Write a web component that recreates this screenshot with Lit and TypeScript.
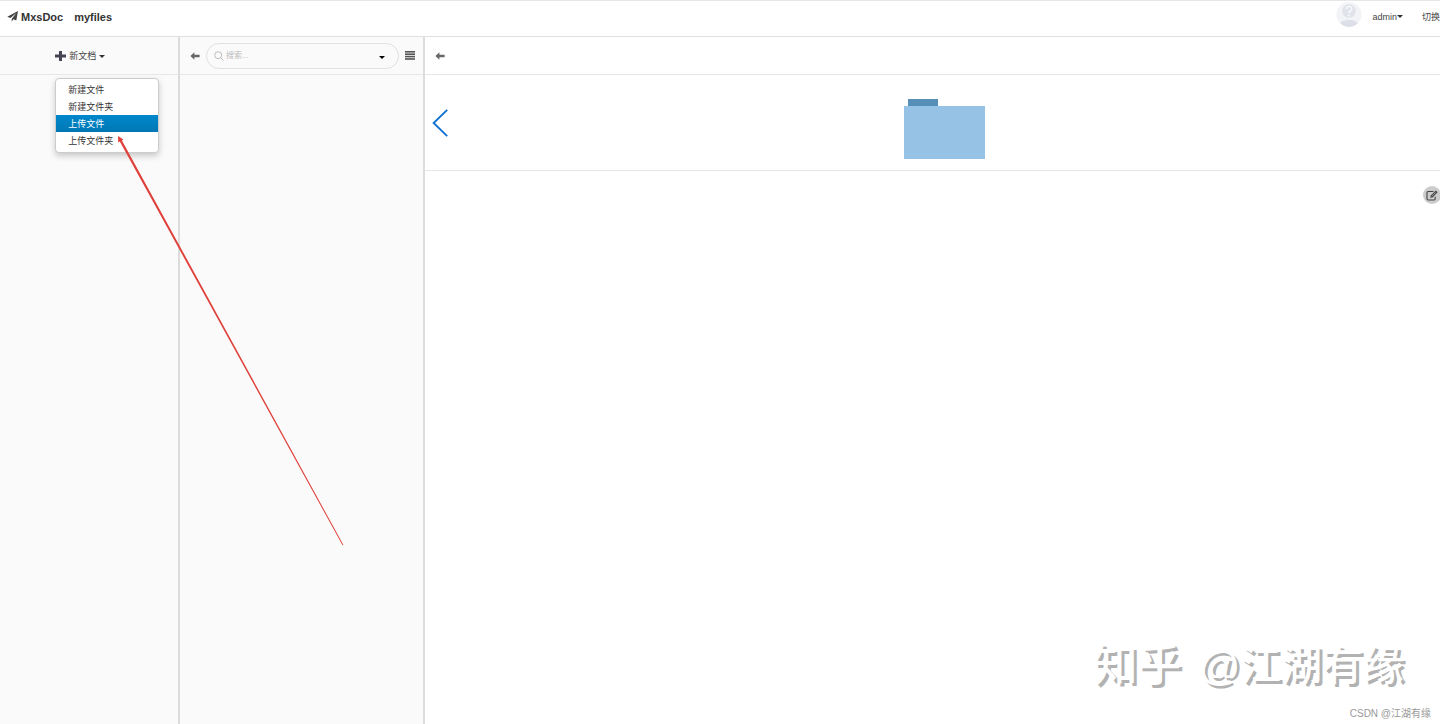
import { LitElement, html, css, svg } from "lit";
import { customElement, state } from "lit/decorators.js";

const arrowLeft = html`<svg class="back" viewBox="0 0 10 8" aria-hidden="true">
  <path d="M0.4 4 L4.4 0.3 V2.7 H9.6 V5.3 H4.4 V7.7 Z" fill="#666" />
</svg>`;

@customElement("app-root")
export class AppRoot extends LitElement {
  @state() private selected = "上传文件";

  private items = ["新建文件", "新建文件夹", "上传文件", "上传文件夹"];

  static styles = css`
    :host {
      display: flex;
      flex-direction: column;
      position: relative;
      box-sizing: border-box;
      min-height: 100vh;
      overflow: hidden;
      border-top: 1px solid #e7e7e7;
      background: #fff;
      color: #444;
      font: 9px/16px "Liberation Sans", "Noto Sans CJK SC", sans-serif;
    }
    * { box-sizing: border-box; }
    button, input {
      font: inherit;
      color: inherit;
      margin: 0;
      padding: 0;
      border: 0;
      background: none;
    }
    button { cursor: pointer; display: flex; align-items: center; }
    svg { display: block; flex: none; }
    a { color: inherit; text-decoration: none; }
    header {
      display: flex;
      align-items: center;
      height: 36px;
      padding: 0 0 4px 7px;
      border-bottom: 1px solid #e0e0e0;
    }
    .brand {
      display: flex;
      align-items: center;
      gap: 3px;
      margin-right: 11px;
    }
    .brand, .repo { font-size: 11px; font-weight: bold; color: #333; white-space: nowrap; }
    .user {
      display: flex;
      align-items: center;
      height: 100%;
      margin-left: auto;
      white-space: nowrap;
    }
    .avatar { align-self: flex-start; margin-right: 10px; }
    .switch { margin-left: 19px; }
    .caret { border: 3px solid transparent; border-top-color: #333; border-bottom: 0; }
    main { flex: 1; display: grid; grid-template-columns: 12.5% 17% 1fr; }
    .tree { background: #fafafa; border-right: 2px solid #dcdcdc; }
    .list { background: #fafafa; border-right: 2px solid #dcdcdc; }
    .bar {
      display: flex;
      align-items: center;
      height: 38px;
      border-bottom: 1px solid #e7e7e7;
    }
    .list .bar { padding: 0 8px 0 10px; }
    .view .bar { padding-left: 10px; }
    .back { width: 10px; height: 8px; }
    .docs { position: relative; margin-left: 31%; }
    .docs > button { height: 38px; gap: 3px; }
    .docs > button .caret { margin-top: 2px; }
    .menu {
      position: absolute;
      z-index: 2;
      top: 41px;
      left: 0;
      width: 104px;
      margin: 0;
      padding: 2px 0 3px;
      list-style: none;
      background: #fff;
      border: 1px solid #ccc;
      border-radius: 4px;
      box-shadow: 0 3px 6px rgba(0, 0, 0, 0.2);
      color: #333;
    }
    .menu button { width: 100%; height: 17px; padding: 1px 0 0 12px; }
    .menu .on { background: linear-gradient(#0088cc, #0077b3); color: #fff; }
    .search {
      flex: 1;
      display: flex;
      align-items: center;
      height: 26px;
      margin: 0 6px;
      padding: 0 13px 0 7px;
      border: 1px solid #e1e1e1;
      border-radius: 13px;
    }
    .search label { margin-right: 2px; }
    .search input { flex: 1; min-width: 0; font-size: 8px; outline: 0; }
    .search input::placeholder { color: #bbb; opacity: 1; }
    .search .caret { margin-top: 3px; border-top-color: #000; }
    .stage {
      display: flex;
      align-items: center;
      height: 96px;
      padding: 0 0 0 7px;
      border-bottom: 1px solid #e7e7e7;
    }
    .folder { margin: 13px auto 0; }
    .stage button { margin-right: 2px; }
    .edit {
      justify-content: center;
      width: 18px;
      height: 18px;
      margin: 15px -1px 0 auto;
      border-radius: 50%;
      background: #ccc;
    }
    .pointer { position: absolute; z-index: 3; left: 116px; top: 133px; pointer-events: none; }
    .mark {
      position: absolute;
      right: 36px;
      bottom: 28px;
      display: flex;
      align-items: center;
      gap: 17px;
      font-size: 41px;
      line-height: 60px;
      font-weight: 500;
      color: #fff;
      text-shadow: 3px 3px 0 #b2b2b2;
      white-space: nowrap;
    }
    .site { font-size: 44px; }
    .source { position: absolute; right: 9px; bottom: 2px; font-size: 10px; color: #999; }
  `;

  render() {
    return html`
      <header>
        <a class="brand" href="#">
          <svg width="11" height="11" viewBox="0 0 11 11" aria-hidden="true">
            <path d="M11 0 L9.3 9.6 L6.3 8.3 L4.7 10.7 V7.9 L9.3 2.1 L3.5 7.1 L0.3 5.8 Z" fill="#444" />
          </svg>
          MxsDoc
        </a>
        <a class="repo" href="#">myfiles</a>
        <div class="user">
          <svg class="avatar" width="26" height="28" viewBox="0 0 26 28" aria-hidden="true">
            <defs><clipPath id="round"><circle cx="13" cy="13.5" r="12.5" /></clipPath></defs>
            <g clip-path="url(#round)">
              <rect width="26" height="28" fill="#f2f3f6" />
              <ellipse cx="13" cy="22.5" rx="8.5" ry="3.5" fill="#dcdfe7" />
              <circle cx="13" cy="10" r="7.5" fill="#e0e3ea" stroke="#f8f8fa" />
              <path d="M10.5 8.2 C10.5 4.6 16 4.8 15.8 8 C15.7 10 13 10 13 12" fill="none" stroke="#f7f8fa" stroke-width="1.6" />
              <circle cx="13" cy="14.5" r="1" fill="#f7f8fa" />
            </g>
          </svg>
          <button>admin<span class="caret"></span></button>
          <button class="switch">切换</button>
        </div>
      </header>
      <main>
        <aside class="tree">
          <div class="bar">
            <div class="docs">
              <button>
                <svg width="11" height="10" viewBox="0 0 11 10" aria-hidden="true">
                  <path d="M4 0H7V3.5H11V6.5H7V10H4V6.5H0V3.5H4Z" fill="#445" />
                </svg>
                新文档<span class="caret"></span>
              </button>
              <ul class="menu">
                ${this.items.map(
                  (item) => html`<li>
                    <button class=${item === this.selected ? "on" : ""} @click=${() => (this.selected = item)}>${item}</button>
                  </li>`
                )}
              </ul>
            </div>
          </div>
        </aside>
        <section class="list">
          <div class="bar">
            <button aria-label="返回">${arrowLeft}</button>
            <div class="search">
              <label for="query" aria-label="搜索">
                <svg width="10" height="10" viewBox="0 0 10 10" aria-hidden="true">
                  <g fill="none" stroke="#bbb"><circle cx="4.2" cy="4.2" r="3.5" /><path d="M6.8 6.8 L9.6 9.6" /></g>
                </svg>
              </label>
              <input id="query" type="text" placeholder="搜索..." />
              <button aria-label="搜索选项"><span class="caret"></span></button>
            </div>
            <button aria-label="列表">
              <svg width="10" height="9" viewBox="0 0 10 9" aria-hidden="true">
                ${[0, 2.4, 4.8, 7.2].map((y) => svg`<rect y=${y} width="10" height="1.6" fill="#555" />`)}
              </svg>
            </button>
          </div>
        </section>
        <section class="view">
          <div class="bar"><button aria-label="返回">${arrowLeft}</button></div>
          <div class="stage">
            <button aria-label="上一个">
              <svg width="16" height="28" viewBox="0 0 16 28" aria-hidden="true">
                <path d="M15.2 0.8 L1.6 14 L15.2 27.2" fill="none" stroke="#0a6fd0" stroke-width="1.8" />
              </svg>
            </button>
            <svg class="folder" width="81" height="60" viewBox="0 0 81 60" aria-hidden="true">
              <rect x="4" width="30" height="8" fill="#5690b8" />
              <rect y="7" width="81" height="53" fill="#96c2e5" />
            </svg>
          </div>
          <button class="edit" aria-label="编辑">
            <svg width="12" height="11" viewBox="0 0 12 11" aria-hidden="true">
              <path d="M7.5 1.5 H2.2 Q1 1.5 1 2.7 V8.8 Q1 10 2.2 10 H8 Q9.2 10 9.2 8.8 V6.8" fill="none" stroke="#444" stroke-width="1.1" />
              <path d="M4.3 7.7 L4.7 5.6 L9.8 0.5 L11.6 2.3 L6.5 7.4 Z" fill="#444" />
              <path d="M5.5 6.4 L9.6 2.3" stroke="#ccc" stroke-width="0.6" />
            </svg>
          </button>
        </section>
      </main>
      <svg class="pointer" width="230" height="414" viewBox="0 0 230 414" aria-hidden="true">
        <path d="M2 2 L7.3 5.5 L5.9 6.4 L227.3 410.8 L226.5 411.2 L3.8 7.4 L2.2 8.4 Z" fill="#df403a" />
      </svg>
      <div class="mark"><span class="site">知乎</span><span>@江湖有缘</span></div>
      <div class="source">CSDN @江湖有缘</div>
    `;
  }
}
